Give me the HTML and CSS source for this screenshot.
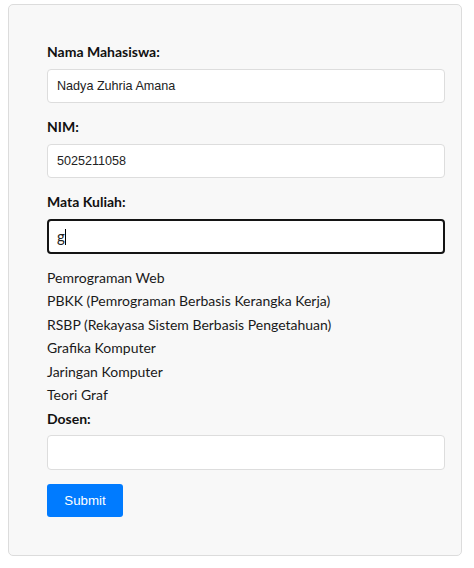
FILE: index.html
```html
<!DOCTYPE html>
<html lang="id">
<head>
<meta charset="utf-8">
<title>Form Mahasiswa</title>
<link rel="stylesheet" href="styles.css">
</head>
<body>
<div class="card">
  <form class="form">
    <label class="label" for="nama">Nama Mahasiswa:</label>
    <input class="input" id="nama" type="text" value="Nadya Zuhria Amana">
    <label class="label" for="nim">NIM:</label>
    <input class="input" id="nim" type="text" value="5025211058">
    <label class="label" for="mk">Mata Kuliah:</label>
    <div class="input input-focus"><span class="typed">g</span><span class="caret"></span></div>
    <ul class="suggestions">
      <li>Pemrograman Web</li>
      <li>PBKK (Pemrograman Berbasis Kerangka Kerja)</li>
      <li>RSBP (Rekayasa Sistem Berbasis Pengetahuan)</li>
      <li>Grafika Komputer</li>
      <li>Jaringan Komputer</li>
      <li>Teori Graf</li>
    </ul>
    <label class="label label-tight" for="dosen">Dosen:</label>
    <input class="input input-last" id="dosen" type="text" value="">
    <button class="submit" type="button">Submit</button>
  </form>
</div>
</body>
</html>
```

FILE: styles.css
```css
* { box-sizing: border-box; }
html, body { margin: 0; padding: 0; background: #ffffff; }
body { font-family: Lato, "Open Sans", sans-serif; color: #111; }

.card {
  margin: 4px 12px 0 8px;
  width: 454px;
  background: #f8f8f8;
  border: 1px solid #dcdcdc;
  border-radius: 5px;
  padding: 37px 16px 38px 38px;
}

.form { display: flex; flex-direction: column; }

.label {
  display: block;
  font-weight: 700;
  font-size: 14px;
  line-height: 20px;
  margin-bottom: 7px;
  color: #111;
}

.input {
  display: flex;
  align-items: center;
  width: 100%;
  height: 34px;
  border: 1px solid #dddddd;
  border-radius: 4px;
  background: #fff;
  padding: 0 9px;
  font-family: "Liberation Sans", Arial, sans-serif;
  font-size: 12.6px;
  color: #222;
  margin: 0 0 14px 0;
  outline: none;
}

.input-focus {
  border: 2px solid #141414;
  height: 35px;
  padding: 0 8px;
  margin-bottom: 12px;
  font-family: Lato, sans-serif;
  font-size: 15px;
}

.typed { line-height: 1; }
.caret { display: inline-block; width: 1px; height: 16px; background: #000; }

.suggestions {
  list-style: none;
  margin: 0;
  padding: 0;
  font-size: 14px;
  line-height: 23.4px;
  color: #1a1a1a;
}

.label-tight { margin-top: 3px; margin-bottom: 6px; }

.input-last { height: 35px; }

.submit {
  align-self: flex-start;
  width: 76px;
  height: 33px;
  border: none;
  border-radius: 3px;
  background: #007bff;
  color: #fff;
  font-family: "Liberation Sans", Arial, sans-serif;
  font-size: 13.3px;
  margin-top: 0;
  padding: 0;
}
```
